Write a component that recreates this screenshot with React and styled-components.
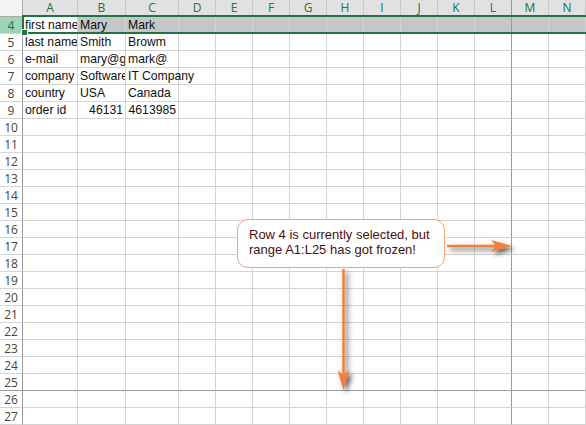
import React from "react";
import styled, { createGlobalStyle } from "styled-components";

const GlobalStyle = createGlobalStyle`
  html, body {
    margin: 0;
    padding: 0;
    background: #ffffff;
    overflow: hidden;
  }
`;

const COLS = ["A", "B", "C", "D", "E", "F", "G", "H", "I", "J", "K", "L", "M", "N"];
const WIDTHS = [55, 48, 53, 37, 37, 37, 37, 37, 37, 37, 37, 37, 37, 37];
const FROZEN_COL = 11; // L
const FROZEN_ROW = 25;
const SELECTED_ROW = 4;

// cell content: [text, align, spill]
const DATA = {
  4: [["first name"], ["Mary"], ["Mark"]],
  5: [["last name"], ["Smith"], ["Browm"]],
  6: [["e-mail"], ["mary@gmail.com"], ["mark@"]],
  7: [["company"], ["Software"], ["IT Company", "left", true]],
  8: [["country"], ["USA"], ["Canada"]],
  9: [["order id"], ["46131", "right"], ["4613985", "right"]],
};

const Sheet = styled.div`
  position: relative;
  display: grid;
  grid-template-columns: 23px ${WIDTHS.map((w) => `${w}px`).join(" ")};
  grid-auto-rows: 17px;
  width: 586px;
  height: 425px;
  overflow: hidden;
  font-family: "Liberation Sans", Arial, sans-serif;
`;

const Corner = styled.div`
  box-sizing: border-box;
  background: #f3f3f3;
  border-right: 1px solid #ababab;
  border-bottom: 1px solid #ababab;
`;

const ColHead = styled.div`
  box-sizing: border-box;
  background: #e1e1e1;
  border-right: 1px solid ${(p) => (p.$frozen ? "#9a9a9a" : "#c8c8c8")};
  color: #217346;
  font-family: "Open Sans", "Liberation Sans", sans-serif;
  font-size: 12px;
  line-height: 16px;
  text-align: center;
`;

const RowHead = styled.div`
  box-sizing: border-box;
  background: ${(p) => (p.$selected ? "#9fd5b7" : "#ffffff")};
  color: ${(p) => (p.$selected ? "#217346" : "#444444")};
  border-right: 1px solid #9a9a9a;
  border-bottom: 1px solid ${(p) => (p.$frozen ? "#9a9a9a" : "#d4d4d4")};
  font-family: "Open Sans", "Liberation Sans", sans-serif;
  font-size: 12px;
  line-height: 17px;
  text-align: center;
`;

const Cell = styled.div`
  box-sizing: border-box;
  position: relative;
  z-index: ${(p) => (p.$spill || p.$active ? 2 : "auto")};
  background: ${(p) => (p.$active || p.$spill ? "transparent" : p.$selected ? "#c6c6c6" : "#ffffff")};
  border-right: 1px solid ${(p) => (p.$frozenRight ? "#9a9a9a" : "#d4d4d4")};
  border-bottom: 1px solid ${(p) => (p.$frozenBottom ? "#9a9a9a" : "#d4d4d4")};
`;

const CellText = styled.div`
  height: 16px;
  padding: 0 2px;
  color: #111111;
  font-size: 12.2px;
  line-height: 17px;
  white-space: nowrap;
  text-align: ${(p) => p.$align};
  overflow: ${(p) => (p.$spill ? "visible" : "hidden")};
`;

const Selection = styled.div`
  position: absolute;
  left: -1px;
  top: -2px;
  width: 566px;
  height: 19px;
  box-sizing: border-box;
  border: 2px solid #217346;
  border-right: none;
  pointer-events: none;
  z-index: 3;
`;

const FillHandle = styled.span`
  position: absolute;
  left: -3px;
  bottom: -4px;
  width: 5px;
  height: 5px;
  background: #217346;
  border: 1px solid #ffffff;
`;

const Callout = styled.div`
  position: absolute;
  left: 237px;
  top: 219px;
  width: 208px;
  height: 49px;
  box-sizing: border-box;
  padding: 7px 0 0 11px;
  background: #ffffff;
  border: 1.5px solid #f7a06a;
  border-radius: 11px;
  color: #4a1010;
  font-family: "Liberation Sans", Arial, sans-serif;
  font-size: 13px;
  line-height: 15px;
  z-index: 5;
`;

const Arrows = styled.svg`
  position: absolute;
  left: 0;
  top: 0;
  z-index: 4;
  pointer-events: none;
`;

const Arrow = ({ d, head }) => (
  <g filter="url(#shadow)">
    <path d={d} stroke="#f2803b" strokeWidth="2.5" fill="none" />
    <path d={head} fill="#f2803b" />
  </g>
);

export default function App() {
  const rows = [];
  for (let r = 4; r <= 27; r++) {
    const data = DATA[r] || [];
    const sel = r === SELECTED_ROW;
    rows.push(
      <RowHead key={`h${r}`} $selected={sel} $frozen={r === FROZEN_ROW}>
        {r}
      </RowHead>
    );
    COLS.forEach((c, i) => {
      const [text, align = "left", spill = false] = data[i] || [];
      const active = sel && i === 0;
      rows.push(
        <Cell
          key={`${c}${r}`}
          $selected={sel}
          $active={active}
          $frozenRight={i === FROZEN_COL}
          $frozenBottom={r === FROZEN_ROW}
          $spill={spill}
        >
          <CellText $align={align} $spill={spill}>
            {text}
          </CellText>
          {active && (
            <Selection>
              <FillHandle />
            </Selection>
          )}
        </Cell>
      );
    });
  }

  return (
    <>
      <GlobalStyle />
      <Sheet>
        <Corner />
        {COLS.map((c, i) => (
          <ColHead key={c} $frozen={i === FROZEN_COL}>
            {c}
          </ColHead>
        ))}
        {rows}
        <Callout>
          Row 4 is currently selected, but
          <br />
          range A1:L25 has got frozen!
        </Callout>
        <Arrows width="586" height="425" viewBox="0 0 586 425">
          <defs>
            <filter id="shadow" x="-30%" y="-30%" width="180%" height="180%">
              <feDropShadow dx="3" dy="3" stdDeviation="2.5" floodColor="#333" floodOpacity="0.8" />
            </filter>
          </defs>
          <Arrow d="M447 246 H496" head="M512 246 L491 240 L496 246 L491 252 Z" />
          <Arrow d="M343.5 269 V375" head="M343.5 390 L337.5 370 L343.5 375 L349.5 370 Z" />
        </Arrows>
      </Sheet>
    </>
  );
}
